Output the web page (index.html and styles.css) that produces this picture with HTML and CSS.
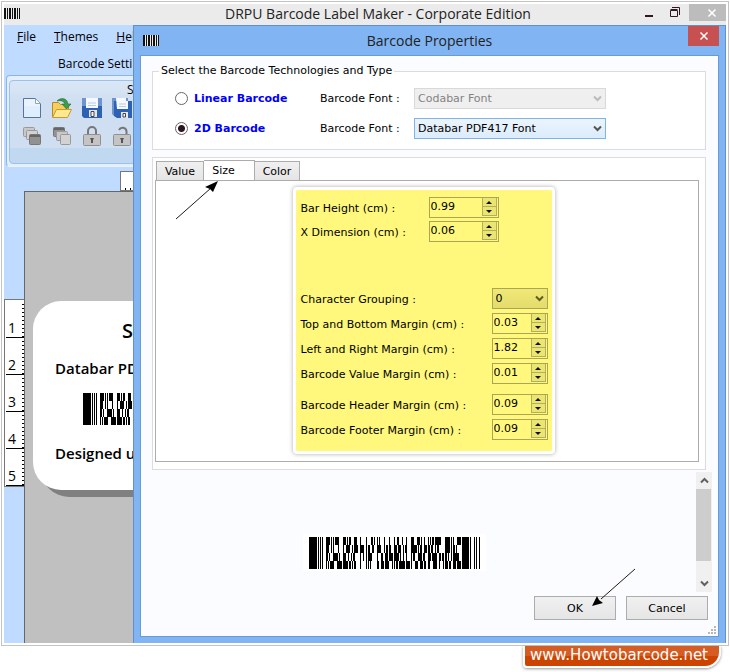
FILE: index.html
```html
<!DOCTYPE html>
<html lang="en">
<head>
    <meta charset="UTF-8">
    <meta name="viewport" content="width=device-width, initial-scale=1.0">
    <title>DRPU Barcode Label Maker - Corporate Edition</title>
    <link rel="stylesheet" href="styles.css">
</head>
<body>
    <div class="window">
        <header class="title-bar">
            <span class="app-icon"></span>
            <h1>DRPU Barcode Label Maker - Corporate Edition</h1>
            <button class="win-btn" aria-label="Minimize"><svg width="10" height="12"><path d="M1 10h8" stroke="#301820" stroke-width="2"/></svg></button>
            <button class="win-btn" aria-label="Restore"><svg width="12" height="12" fill="none" stroke="#301820"><path d="M1.500 4.500h7v6h-7zM1.500 3.500h7M3 1.500h7.500V9"/></svg></button>
            <button class="win-btn win-close" aria-label="Close"><svg width="10" height="10"><path d="M1.500 1.500l7 7M8.500 1.500l-7 7" stroke="#fff" stroke-width="1.500"/></svg></button>
        </header>

        <div class="desktop">
            <!-- main window -->
            <div class="workspace">
                <nav class="menu">
                    <a href="#"><u>F</u>ile</a>
                    <a href="#"><u>T</u>hemes</a>
                    <a href="#"><u>H</u>elp</a>
                </nav>
                <div class="ribbon-tab">Barcode Settings</div>
                <div class="ribbon">
                    <div class="ribbon-group">
                        <div class="ribbon-title">Standard</div>
                        <div class="tools">
                            <button aria-label="New"><svg width="20" height="20"><path d="M1.500.5h12l5 5v14h-17z" fill="#eaf4ff" stroke="#54759f"/><path d="M2 8h16v11H2z" fill="#d7eaff" opacity=".6"/><path d="M13.500.5v5h5z" fill="#fff" stroke="#8aa4c4"/></svg></button>
                            <button aria-label="Open"><svg width="20" height="20"><path d="M.5 19V4.500h6l2 2h8V12" fill="#f5cf5c" stroke="#b8892b"/><path d="M.5 19.500l4-8h15l-4 8z" fill="#ffe98e" stroke="#c99a30"/><path d="M5 3c4-4 10-3 11 3h3l-4.500 5L10 6h3c-1-3-4-4-8-3z" fill="#3f9d4c" stroke="#1f6b38" stroke-width=".6"/></svg></button>
                            <button aria-label="Save"><svg width="20" height="20"><path d="M0 0h20v20H2l-2-2z" fill="#2c61b4"/><path d="M0 0h4v8H0zM16 0h4v8h-4z" fill="#6d94cf"/><path d="M4 0h12v10H4z" fill="#f5f9ff"/><path d="M6 5h8M6 7.500h8" stroke="#b9cbe0"/><path d="M7 12h8v7H7z" fill="#e4e8ee"/><path d="M9 13.500h3v5H9z" fill="#f8f8f8" stroke="#444"/></svg></button>
                            <button aria-label="Save all"><svg width="20" height="20"><path d="M0 0h16v18H2l-2-2z" fill="#6d94cf"/><path d="M2 3h18v17H5l-3-2z" fill="#2c61b4"/><path d="M4 0h10v3h2v8H5z" fill="#f5f9ff"/><path d="M7 6h7M7 8.500h7" stroke="#b9cbe0"/><path d="M9 14h7v6H9z" fill="#e4e8ee"/><path d="M11 15.500h2.500v3.500H11z" fill="#f8f8f8" stroke="#444"/></svg></button>
                            <button aria-label="Bring to front"><svg width="20" height="20" stroke="#999"><rect x="1.500" y="1.500" width="11" height="9" rx="1" fill="#c8c8c8"/><rect x="4.500" y="4.500" width="11" height="9" rx="1" fill="#d2d2d2"/><rect x="7.500" y="8.500" width="11" height="10" rx="1" fill="#929292" stroke="#777"/><path d="M8 10h10" stroke="#666" stroke-width="2"/></svg></button>
                            <button aria-label="Send to back"><svg width="20" height="20" stroke="#999"><rect x="1.500" y="1.500" width="11" height="9" rx="1" fill="#929292" stroke="#777"/><path d="M2 3h10" stroke="#666" stroke-width="2"/><rect x="4.500" y="5.500" width="11" height="9" rx="1" fill="#c8c8c8"/><rect x="8.500" y="8.500" width="10" height="10" rx="1" fill="#d2d2d2"/></svg></button>
                            <button aria-label="Lock"><svg width="20" height="20"><path d="M6 9V5a4 4 0 0 1 8 0v4" fill="none" stroke="#777" stroke-width="2"/><rect x="1.500" y="8.500" width="17" height="11" rx="1" fill="#c4c4c4" stroke="#909090"/><path d="M8 12h4l-1 2v3H9v-3z" fill="#555"/></svg></button>
                            <button aria-label="Unlock"><svg width="20" height="20"><path d="M7 4a4 4 0 0 1 7.500 1v4" fill="none" stroke="#777" stroke-width="2"/><rect x="1.500" y="8.500" width="17" height="11" rx="1" fill="#c4c4c4" stroke="#909090"/><path d="M8 12h4l-1 2v3H9v-3z" fill="#555"/></svg></button>
                        </div>
                    </div>
                </div>
                <div class="ruler-top"></div>
                <div class="design">
                    <ol class="ruler">
                        <li>1</li>
                        <li>2</li>
                        <li>3</li>
                        <li>4</li>
                        <li>5</li>
                    </ol>
                    <div class="canvas">
                        <div class="label-card">
                            <h2>Sample</h2>
                            <p>Databar PDF417 Font</p>
                            <svg class="barcode" width="171" height="32"></svg>
                            <p>Designed using</p>
                        </div>
                    </div>
                </div>
            </div>

            <!-- barcode properties dialog -->
            <form class="dialog">
                <div class="dialog-header">
                    <span class="app-icon"></span>
                    <h2>Barcode Properties</h2>
                    <button type="button" class="dialog-close" aria-label="Close"><svg width="10" height="10"><path d="M1.500 1.500l7 7M8.500 1.500l-7 7" stroke="#fff" stroke-width="1.500"/></svg></button>
                </div>
                <div class="dialog-body">
                    <fieldset class="type-group">
                        <legend>Select the Barcode Technologies and Type</legend>
                        <div class="type-row">
                            <label class="radio"><input type="radio" name="type"> Linear Barcode</label>
                            <label for="linear-font">Barcode Font :</label>
                            <select id="linear-font" disabled>
                                <option>Codabar Font</option>
                            </select>
                        </div>
                        <div class="type-row">
                            <label class="radio"><input type="radio" name="type" checked> 2D Barcode</label>
                            <label for="font-2d">Barcode Font :</label>
                            <select id="font-2d" class="active">
                                <option>Databar PDF417 Font</option>
                            </select>
                        </div>
                    </fieldset>

                    <div class="tab-group">
                        <div class="tabs" role="tablist">
                            <button type="button" role="tab">Value</button>
                            <button type="button" role="tab" class="selected" aria-selected="true">Size</button>
                            <button type="button" role="tab">Color</button>
                        </div>
                        <div class="tab-page">
                            <svg class="arrow arrow-size" width="46" height="40"><path d="M1 39L36 8" stroke="#201820"/><path d="M43 1l-5 11-3-3-5-2z"/></svg>
                            <div class="size-panel">
                                <div class="fields short">
                                    <div class="field">
                                        <label for="bar-height">Bar Height (cm) :</label>
                                        <div class="spin"><input id="bar-height" type="text" value="0.99"><span class="spin-btns"><button type="button" class="up" aria-label="Up"></button><button type="button" class="down" aria-label="Down"></button></span></div>
                                    </div>
                                    <div class="field">
                                        <label for="x-dim">X Dimension (cm) :</label>
                                        <div class="spin"><input id="x-dim" type="text" value="0.06"><span class="spin-btns"><button type="button" class="up" aria-label="Up"></button><button type="button" class="down" aria-label="Down"></button></span></div>
                                    </div>
                                </div>
                                <div class="fields">
                                    <div class="field">
                                        <label for="grouping">Character Grouping :</label>
                                        <select id="grouping">
                                            <option>0</option>
                                        </select>
                                    </div>
                                    <div class="field">
                                        <label for="top-margin">Top and Bottom Margin (cm) :</label>
                                        <div class="spin"><input id="top-margin" type="text" value="0.03"><span class="spin-btns"><button type="button" class="up" aria-label="Up"></button><button type="button" class="down" aria-label="Down"></button></span></div>
                                    </div>
                                    <div class="field">
                                        <label for="left-margin">Left and Right Margin (cm) :</label>
                                        <div class="spin"><input id="left-margin" type="text" value="1.82"><span class="spin-btns"><button type="button" class="up" aria-label="Up"></button><button type="button" class="down" aria-label="Down"></button></span></div>
                                    </div>
                                    <div class="field">
                                        <label for="value-margin">Barcode Value Margin (cm) :</label>
                                        <div class="spin"><input id="value-margin" type="text" value="0.01"><span class="spin-btns"><button type="button" class="up" aria-label="Up"></button><button type="button" class="down" aria-label="Down"></button></span></div>
                                    </div>
                                </div>
                                <div class="fields">
                                    <div class="field">
                                        <label for="header-margin">Barcode Header Margin (cm) :</label>
                                        <div class="spin"><input id="header-margin" type="text" value="0.09"><span class="spin-btns"><button type="button" class="up" aria-label="Up"></button><button type="button" class="down" aria-label="Down"></button></span></div>
                                    </div>
                                    <div class="field">
                                        <label for="footer-margin">Barcode Footer Margin (cm) :</label>
                                        <div class="spin"><input id="footer-margin" type="text" value="0.09"><span class="spin-btns"><button type="button" class="up" aria-label="Up"></button><button type="button" class="down" aria-label="Down"></button></span></div>
                                    </div>
                                </div>
                            </div>
                        </div>
                    </div>

                    <div class="preview">
                        <div class="preview-code"><svg class="barcode" width="171" height="32"></svg></div>
                        <div class="scrollbar">
                            <button type="button" aria-label="Scroll up"><svg width="9" height="7"><path d="M1 5.500l3.500-3.500L8 5.500" fill="none" stroke="#606060" stroke-width="2"/></svg></button>
                            <span class="thumb"></span>
                            <button type="button" aria-label="Scroll down"><svg width="9" height="7"><path d="M1 1.500L4.500 5 8 1.500" fill="none" stroke="#606060" stroke-width="2"/></svg></button>
                        </div>
                    </div>

                    <div class="actions">
                        <button type="button">OK</button>
                        <button type="button">Cancel</button>
                        <svg class="arrow arrow-ok" width="46" height="40"><path d="M44 1L10 31" stroke="#201820"/><path d="M1 38l5-10 2 4 4 3z"/></svg>
                    </div>
                    <svg class="grip" width="8" height="8" fill="#b8b8b8"><path d="M6 0h2v2H6zM3 3h2v2H3zM6 3h2v2H6zM0 6h2v2H0zM3 6h2v2H3zM6 6h2v2H6z"/></svg>
                </div>
            </form>
        </div>
    </div>

    <footer class="footer">
        <a class="site-link" href="#">www.Howtobarcode.net</a>
    </footer>
    <script src="barcode.js"></script>
</body>
</html>
```

FILE: styles.css
```css
* {
    box-sizing: border-box;
}

body {
    margin: 0;
    height: 100vh;
    display: flex;
    flex-direction: column;
    background-color: #fff;
    font-family: "DejaVu Sans", Verdana, sans-serif;
    font-size: 11px;
    color: #000;
}

button, input, select {
    font-family: inherit;
    font-size: inherit;
    color: inherit;
    margin: 0;
    padding: 0;
}

h1, h2, p {
    margin: 0;
}

svg {
    display: block;
}

.window {
    flex: 1;
    min-height: 0;
    margin: 1px 1px 0;
    padding: 2px;
    border: 1px solid #c4c4c4;
    display: flex;
    flex-direction: column;
}

.title-bar {
    display: flex;
    height: 21px;
    background-color: #ebebeb;
}

.title-bar h1 {
    flex: 1;
    padding-left: 96px;
    text-align: center;
    white-space: nowrap;
    font: 400 14px/20px "Open Sans", "Segoe UI", sans-serif;
    color: #222;
}

.app-icon {
    width: 16px;
    height: 11px;
    margin: 4px 4px 0 0;
    background: repeating-linear-gradient(90deg, #111 0 2px, #eee 2px 3px, #111 3px 4px, #eee 4px 5px);
}

.win-btn {
    display: flex;
    align-items: center;
    justify-content: center;
    width: 26px;
    height: 15px;
    border: none;
    background: none;
}

.win-close {
    width: 37px;
    height: 17px;
    margin-left: 1px;
    background-color: #bcbcbc;
    padding-left: 8px;
}

.desktop {
    position: relative;
    flex: 1;
    min-height: 0;
    overflow: hidden;
    background-color: #bfdbff;
}

/* main window */
.workspace {
    height: 100%;
    display: flex;
    flex-direction: column;
    font-family: "Open Sans", "Segoe UI", sans-serif;
    font-size: 12px;
}

.menu {
    display: flex;
    gap: 18px;
    padding: 2px 0 0 13px;
    line-height: 20px;
}

.menu a {
    color: #000;
    text-decoration: none;
}

.ribbon-tab {
    padding: 9px 0 0 54px;
    line-height: 16px;
    margin-bottom: 3px;
}

.ribbon {
    height: 92px;
    margin-left: 2px;
    padding: 4px 0 3px 2px;
    border: 1px solid #8bb5ea;
    border-bottom-color: #eaf3fd;
    border-radius: 4px;
    background-color: #e3effd;
}

.ribbon-group {
    height: 84px;
    border: 1px solid #9dc0ee;
    border-radius: 4px;
    background: linear-gradient(#dbe7f5 0, #cfdff1 20px 67px, #c1d8f1 67px);
}

.ribbon-title {
    padding-left: 117px;
    line-height: 17px;
}

.tools {
    display: grid;
    grid-template-columns: repeat(4, 20px);
    gap: 8px 10px;
    padding-left: 12px;
}

.tools button {
    border: none;
    background: none;
}

.ruler-top {
    height: 20px;
    margin: 4px 0 0 116px;
    border: 1px solid #777;
    background: repeating-linear-gradient(90deg, transparent 0 4px, #000 4px 5px) 0 100% / 100% 2px no-repeat #fff;
}

.design {
    flex: 1;
    display: flex;
    min-height: 0;
}

.ruler {
    list-style: none;
    align-self: flex-start;
    width: 20px;
    margin: 108px 0 0;
    padding: 1px 0 0 1px;
    border: 1px solid #777;
    border-right: none;
    background-color: #fff;
}

.ruler li {
    height: 37px;
    padding: 18px 0 0 2px;
    font-size: 14px;
    line-height: 18px;
    border-bottom: 1px solid #000;
    background: repeating-linear-gradient(transparent 0 3px, #000 3px 4px) 100% 0 / 2px 100% no-repeat;
}

.canvas {
    flex: 1;
    padding: 109px 0 0 8px;
    border: solid #666;
    border-width: 1px 0 0 1px;
    background-color: #c0c0c0;
}

.label-card {
    height: 189px;
    padding: 17px 0 0 22px;
    border-radius: 28px;
    background-color: #fff;
    box-shadow: 8px 7px 0 #808080;
    font-size: 15px;
    font-weight: 600;
}

.label-card h2 {
    padding-left: 67px;
    font-size: 20px;
    line-height: 26px;
    font-weight: 600;
}

.label-card p {
    margin-top: 14px;
    line-height: 20px;
    white-space: nowrap;
}

.label-card .barcode {
    margin: 15px 0 18px 28px;
}

/* dialog */
.dialog {
    position: absolute;
    top: 0;
    right: 0;
    bottom: 0;
    left: 129px;
    display: flex;
    flex-direction: column;
    padding: 0 6px 6px;
    border: solid #5f92cc;
    border-width: 1px 1px 0;
    background-color: #80b4f2;
}

.dialog-header {
    display: grid;
    grid-template-columns: 31px 1fr 31px;
    height: 29px;
}

.dialog-header .app-icon {
    margin: 9px 0 0 3px;
}

.dialog-header h2 {
    text-align: center;
    font: 400 14px/29px "Open Sans", "Segoe UI", sans-serif;
    color: #222;
}

.dialog-close {
    display: flex;
    align-items: center;
    justify-content: center;
    height: 20px;
    border: none;
    background-color: #c75050;
}

.dialog-body {
    position: relative;
    flex: 1;
    display: flex;
    flex-direction: column;
    padding: 8px 12px 16px 11px;
    border: 1px solid #6a9ad4;
    background-color: #fbfcff;
}

.type-group {
    margin: 0;
    padding: 10px 0 10px 22px;
    border: 1px solid #dcdcdc;
    background-color: #fff;
}

.type-group legend {
    margin-left: -16px;
    padding: 0 2px;
    line-height: 14px;
}

.type-row {
    display: grid;
    grid-template-columns: 145px 94px 192px;
    align-items: center;
    height: 21px;
}

.type-row + .type-row {
    margin-top: 9px;
}

.radio {
    display: flex;
    align-items: center;
    gap: 6px;
    font-weight: 700;
    color: #00f;
}

.radio input {
    appearance: none;
    width: 13px;
    height: 13px;
    margin: 0;
    border: 1px solid #666;
    border-radius: 50%;
    background-color: #fff;
}

.radio input:checked {
    background: radial-gradient(circle, #2a1520 0 3px, #fff 4px);
}

select {
    appearance: none;
    height: 21px;
    padding: 0 3px;
    border: 1px solid #d9d9d9;
    border-radius: 0;
    background: url("data:image/svg+xml,%3Csvg xmlns='http://www.w3.org/2000/svg' width='9' height='7'%3E%3Cpath d='M1 1.500L4.500 5 8 1.500' fill='none' stroke='%23bbb' stroke-width='2'/%3E%3C/svg%3E") right 3px center no-repeat #efefef;
}

select:disabled {
    color: #838383;
    opacity: 1;
}

select.active {
    border-color: #7eb4ea;
    background: url("data:image/svg+xml,%3Csvg xmlns='http://www.w3.org/2000/svg' width='9' height='7'%3E%3Cpath d='M1 1.500L4.500 5 8 1.500' fill='none' stroke='%23555' stroke-width='2'/%3E%3C/svg%3E") right 3px center no-repeat, linear-gradient(#ebf4fc, #dcecfc);
}

.tab-group {
    margin-top: 7px;
    padding: 2px 6px 7px 2px;
    border: 1px solid #dcdcdc;
    background-color: #fff;
}

.tabs {
    display: flex;
    align-items: flex-end;
    padding-left: 1px;
}

.tabs button {
    width: 45px;
    height: 19px;
    border: 1px solid #acacac;
    border-left-width: 0;
    border-bottom: none;
    background: linear-gradient(#f0f0f0, #e5e5e5);
}

.tabs button:first-child {
    width: 48px;
    border-left-width: 1px;
}

.tabs .selected {
    position: relative;
    width: 51px;
    height: 21px;
    margin-bottom: -1px;
    padding: 0 11px 2px 0;
    background: #fff;
}

.tab-page {
    position: relative;
    display: flex;
    justify-content: center;
    padding: 6px 7px 7px 0;
    border: 1px solid #acacac;
}

.size-panel {
    width: 262px;
    padding: 7px 0 11px 5px;
    border: 3px solid #fff;
    border-radius: 4px;
    background-color: #fff87c;
    background-clip: padding-box;
    box-shadow: 0 0 4px #aaa;
}

.fields {
    display: flex;
    flex-direction: column;
    gap: 4px;
}

.short {
    gap: 3px;
    margin-bottom: 46px;
}

.fields + .fields:last-child {
    margin-top: 10px;
}

.field {
    display: grid;
    grid-template-columns: 191px 56px;
    height: 21px;
}

.short .field {
    grid-template-columns: 128px 70px;
}

.field label {
    padding-top: 1px;
    line-height: 21px;
}

.spin, .field select {
    border: 1px solid #aba653;
}

.field select {
    background: url("data:image/svg+xml,%3Csvg xmlns='http://www.w3.org/2000/svg' width='9' height='7'%3E%3Cpath d='M1 1.500L4.500 5 8 1.500' fill='none' stroke='%23605d20' stroke-width='2'/%3E%3C/svg%3E") right 3px center no-repeat, linear-gradient(#f0e976, #e3dc6e);
}

.spin {
    display: flex;
    height: 21px;
}

.spin input {
    flex: 1;
    min-width: 0;
    height: 17px;
    padding-left: 1px;
    border: none;
    background: none;
}

.spin-btns {
    width: 15px;
    margin-right: 1px;
    display: flex;
    flex-direction: column;
}

.spin-btns button {
    display: flex;
    align-items: center;
    justify-content: center;
    height: 9px;
    border: 1px solid #b5af58;
    border-top: none;
    background-color: #ebe574;
}

.spin-btns button::before {
    content: "";
    border: 3px solid transparent;
}

.spin-btns .up::before {
    border-top: none;
    border-bottom-color: #111;
}

.spin-btns .down::before {
    border-bottom: none;
    border-top-color: #111;
}

.preview {
    flex: 1;
    display: flex;
    justify-content: space-between;
    margin: 2px -6px 4px 0;
}

.preview-code {
    align-self: flex-start;
    margin: 62px 0 0 151px;
    padding: 3px 6px 2px;
    background-color: #fff;
}

.scrollbar {
    display: flex;
    flex-direction: column;
    width: 16px;
    background-color: #f0f0f0;
}

.scrollbar button {
    display: flex;
    align-items: center;
    justify-content: center;
    height: 17px;
    border: none;
    background: none;
}

.thumb {
    height: 72px;
    margin: 0 1px auto 0;
    background-color: #cdcdcd;
}

.actions {
    position: relative;
    display: flex;
    justify-content: flex-end;
    gap: 10px;
    margin-right: -2px;
}

.actions button {
    width: 82px;
    height: 24px;
    border: 1px solid #acacac;
    background: linear-gradient(#f0f0f0, #e5e5e5);
}

.grip {
    position: absolute;
    right: 2px;
    bottom: 2px;
}

/* pointers over the controls */
.arrow {
    position: absolute;
}

.arrow-size {
    left: 19px;
    top: -1px;
}

.arrow-ok {
    right: 71px;
    top: -28px;
}

.footer {
    display: flex;
    justify-content: flex-end;
    height: 26px;
    padding-right: 9px;
}

.site-link {
    height: 22px;
    padding: 0 11px 0 5px;
    border: solid #fff;
    border-width: 0 2px 2px;
    border-radius: 0 0 16px 4px;
    background: linear-gradient(#d55c22 0 10px, #cc4400 10px);
    box-shadow: 0 1px 3px #999;
    color: #fff;
    font-size: 15px;
    line-height: 19px;
    text-decoration: none;
}
```

FILE: barcode.js
```js
// bar and space widths, one codeword per group
const start = '81111113';
const stop = '711311121';
const rows = [
    '41111144 31112333 15142112 11141414 12231314 33311213 11112164 51111341',
    '32111414 12421142 42112223 43112123 31321124 61112231 21221126 51112115',
    '21135113 32121125 12121145 13223141 51121214 11234123 31522121 21121163',
    '11114351 51211124 15111116 22314311 11216141 13323122 23421311 31223141'
];

document.querySelectorAll('.barcode').forEach(function(svg) {
    let d = '';
    rows.forEach(function(row, r) {
        const widths = (start + row.replace(/ /g, '') + stop).split('').map(Number);
        let x = 0;
        widths.forEach(function(w, i) {
            if (i % 2 === 0) {
                d += `M${x} ${r * 8}h${w}v8h-${w}z`;
            }
            x += w;
        });
    });
    const path = document.createElementNS('http://www.w3.org/2000/svg', 'path');
    path.setAttribute('d', d);
    svg.appendChild(path);
});
```
